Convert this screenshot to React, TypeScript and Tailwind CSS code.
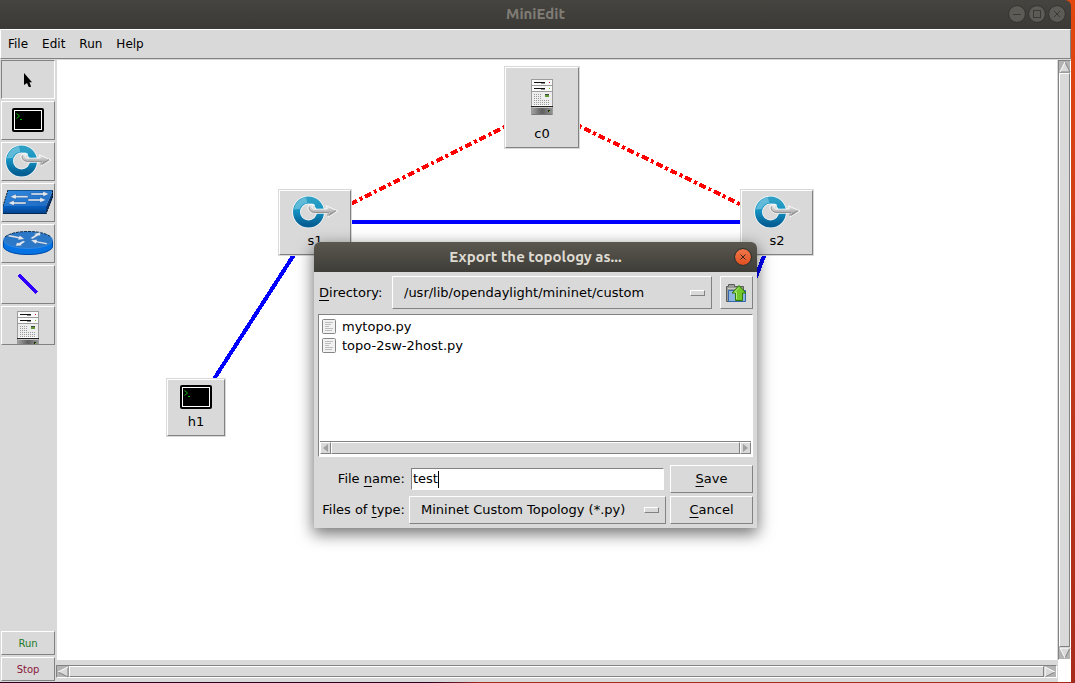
import { useState } from 'react';
import type { ReactNode } from 'react';
import clsx from 'clsx';

const raised = 'border border-t-white border-l-white border-r-[#828282] border-b-[#828282]';
const sunken = 'border border-t-[#828282] border-l-[#828282] border-r-white border-b-white';

/* ---------- Icons ---------- */

const CursorIcon = () => (
  <svg width="10" height="16" viewBox="0 0 10 16" aria-hidden="true">
    <path d="M1 1v12l3-2 1.800 4h2v-1L6.500 10.200H9z" fill="#000" />
  </svg>
);

const HostIcon = () => (
  <svg width="32" height="24" viewBox="0 0 32 24" aria-hidden="true">
    <rect width="32" height="24" rx="2" fill="#000" />
    <rect x="2.5" y="2.5" width="27" height="19" fill="#000" stroke="#fff" />
    <path d="M4.5 5.5l3 2.5-3 2.5M8 11.500h2" fill="none" stroke="#00b800" />
  </svg>
);

const SwitchIcon = () => (
  <svg width="46" height="34" viewBox="0 0 46 34" aria-hidden="true">
    <defs>
      <linearGradient id="ring" x1="0" y1="0" x2="0" y2="1">
        <stop offset="0" stopColor="#2d9fc4" />
        <stop offset="0.45" stopColor="#1593c2" />
        <stop offset="1" stopColor="#045f94" />
      </linearGradient>
      <linearGradient id="metal" x1="0" y1="0" x2="0" y2="1">
        <stop offset="0" stopColor="#f0f0f0" />
        <stop offset="0.5" stopColor="#c0c0c0" />
        <stop offset="1" stopColor="#858585" />
      </linearGradient>
    </defs>
    <circle cx="16.5" cy="17" r="12" fill="none" stroke="#f3f8fa" strokeWidth="8.600" />
    <circle cx="16.5" cy="17" r="12" fill="none" stroke="url(#ring)" strokeWidth="7" />
    <path d="M1.8 14.5A15 15 0 0 1 14 2.2l1.2 5.6A9.4 9.4 0 0 0 7.6 14z" fill="#7cc8e2" opacity="0.7" />
    <path
      d="M16.500 10.500c1.600-2 5-1.800 6.300-.2-2.600-.4-4 2-1.400 3.900l13.800-.2-.8-3.200 11.600 5.200-9.800 6 1-3.800-14.500.2c-5.800-.8-8-4.800-6.200-7.900z"
      fill="url(#metal)"
      stroke="#fff"
      strokeWidth="0.8"
    />
    <path d="M17.500 11.500c-1 3 1 5.500 5 6h14l-.8 3 8.300-5" fill="none" stroke="#8a8a8a" strokeWidth="0.8" />
  </svg>
);

const LegacySwitchIcon = () => (
  <svg width="50" height="25" viewBox="0 0 50 25" aria-hidden="true">
    <defs>
      <linearGradient id="boxTop" x1="0" y1="0" x2="1" y2="1">
        <stop offset="0" stopColor="#2f8ae2" />
        <stop offset="1" stopColor="#2069c0" />
      </linearGradient>
      <linearGradient id="boxFront" x1="0" y1="0" x2="0" y2="1">
        <stop offset="0" stopColor="#0762c4" />
        <stop offset="1" stopColor="#043f86" />
      </linearGradient>
    </defs>
    <path d="M0 16h43v8H0z" fill="url(#boxFront)" />
    <path d="M43 16l7-16v7l-7 17z" fill="#053a7c" />
    <path d="M5 0h45l-7 16H0z" fill="url(#boxTop)" />
    <path d="M5 0L0 16" stroke="#06101c" strokeDasharray="2 1" />
    <path d="M49.500 0v7l-6.500 17" fill="none" stroke="#06101c" strokeDasharray="2 1" />
    <path d="M5 .5h45" stroke="#12518f" />
    <path d="M0 23.500h43" stroke="#022a58" />
    <g fill="#e4e9ef" stroke="#1a5296" strokeWidth="0.4">
      <path d="M28 3h12V1.200l6 2.800-6 2.600V5H28z" />
      <path d="M25 5.700H13V4L7 6.800l6 2.500V7.700h12z" />
      <path d="M25 9h12V7.200l6 2.800-6 2.600V11H25z" />
      <path d="M23 12.100H11v-1.800l-6 2.800 6 2.500v-1.500h12z" />
    </g>
  </svg>
);

const LegacyRouterIcon = () => (
  <svg width="50" height="25" viewBox="0 0 50 25" aria-hidden="true">
    <path d="M0 9v6c0 5 11 9 25 9s25-4 25-9V9z" fill="#0673e4" />
    <path d="M.5 9v6c0 4.500 11 8.500 24.500 8.500s24.500-4 24.500-8.500V9" fill="none" stroke="#04408a" strokeWidth="0.8" />
    <ellipse cx="25" cy="9" rx="24.500" ry="8.500" fill="#2b78c9" stroke="#3c95ec" strokeWidth="0.6" />
    <path d="M2 6C7 2 16 .5 25 .5S43 2 48 6" fill="none" stroke="#06101c" strokeWidth="0.8" strokeDasharray="3 1" />
    <g fill="#e4e9ef" stroke="#1a5296" strokeWidth="0.3">
      <path d="M6 3.800l10 2 .8-1.400 4.800 3.700-6.600 1 .5-1.500-10.500-2z" />
      <path d="M27 7.200l5.500-3.400-2-.8L37.500 1l-.3 4-1.700-.6L29.500 8z" />
      <path d="M22.500 10.500l-4.500 3.200 1.600.8-7.100.6 1.500-3.600 1.800.6 4.300-2.400z" />
      <path d="M43.500 13.600l-10-2-.8 1.400-5-4 6.800-.6-.7 1.500 10.700 2z" />
    </g>
  </svg>
);

const LinkIcon = () => (
  <svg width="22" height="22" viewBox="0 0 22 22" aria-hidden="true">
    <path d="M2 2l18 18" stroke="#3200ff" strokeWidth="3.500" shapeRendering="crispEdges" />
  </svg>
);

const dotRows = [15, 17, 19, 21, 23, 25];

const ControllerIcon = () => (
  <svg width="22" height="36" viewBox="0 0 22 36" className="shrink-0" aria-hidden="true">
    <defs>
      <linearGradient id="base" x1="0" y1="0" x2="1" y2="0">
        <stop offset="0" stopColor="#a0a0a0" />
        <stop offset="0.5" stopColor="#5f5f5f" />
        <stop offset="1" stopColor="#929292" />
      </linearGradient>
    </defs>
    <rect width="22" height="36" fill="#9c9c9c" />
    <rect x="1" y="1" width="20" height="5" fill="#fafafa" />
    <rect x="1" y="7" width="20" height="5" fill="#fafafa" />
    <rect x="1" y="13" width="20" height="13" fill="#ededed" />
    <path d="M3 3h11v1H3zM3 9h11v1H3z" fill="#111" />
    <path d="M10 4h4v1h-4zM10 10h4v1h-4z" fill="#8a8a8a" />
    <rect x="18" y="3" width="1" height="1" fill="#cc1020" />
    <rect x="18" y="9" width="1" height="1" fill="#7ec81e" />
    {dotRows.map((y) => (
      <path
        key={y}
        d={y < 20 ? `M3 ${y}.5h8` : `M3 ${y}.5h16`}
        stroke="#9b9b9b"
        strokeDasharray="1 1"
      />
    ))}
    <rect x="14" y="15" width="4" height="1" fill="#444" />
    <rect x="14" y="16" width="4" height="2" fill="#5f9a35" />
    <rect x="1" y="26" width="20" height="1" fill="#fff" />
    <rect x="0" y="27" width="22" height="1" fill="#222" />
    <rect x="1" y="28" width="20" height="1" fill="#c4c4c4" />
    <rect x="1" y="29" width="20" height="6" fill="url(#base)" />
    <path d="M17 31h2v2h-2z" fill="#222" />
    <path d="M18 32h1v1h-1z" fill="#7ec81e" />
    <rect x="1" y="35" width="20" height="1" fill="#777" />
  </svg>
);

const FileIcon = () => (
  <svg width="14" height="15" viewBox="0 0 14 15" aria-hidden="true">
    <rect x="0.5" y="0.5" width="13" height="14" rx="1" fill="#f2f2f2" stroke="#858585" />
    <path d="M3 3.500h8M3 5.500h6M3 7.500h4M3 9.500h8M3 11.500h7" stroke="#bdbdbd" />
  </svg>
);

const FolderUpIcon = () => (
  <svg width="21" height="20" viewBox="0 0 21 20" aria-hidden="true">
    <path d="M.5 18.500V3.500h2v-2h6v2h9v15z" fill="#9a9c98" stroke="#5c5e5b" />
    <path d="M2 5.500h14" stroke="#c9cbc8" />
    <path d="M2.500 7.500h17v11h-17z" fill="#8fb3e0" stroke="#3465a4" />
    <path
      d="M13 2.500l7 7.500h-3.500v7.500h-7V10H6z"
      fill="#73c62a"
      stroke="#2f7a06"
      strokeLinejoin="round"
    />
    <path d="M13 4.500L8.500 9.200h2V16" stroke="#b6ea82" fill="none" />
  </svg>
);

type Direction = 'up' | 'down' | 'left' | 'right';

const arrows: Record<Direction, { fill: string; light: string; dark: string }> = {
  up: { fill: 'M6 1L1 11h10z', light: 'M6 1L1 11', dark: 'M1 11h10L6 1' },
  down: { fill: 'M1 1h10L6 11z', light: 'M6 11L1 1h10', dark: 'M11 1L6 11' },
  left: { fill: 'M1 6l10-5v10z', light: 'M1 6l10-5', dark: 'M11 1v10L1 6' },
  right: { fill: 'M1 1l10 5-10 5z', light: 'M1 11V1l10 5', dark: 'M11 6L1 11' },
};

const ScrollArrow = ({ direction }: { direction: Direction }) => (
  <button className="block h-3 w-3 shrink-0" aria-label={`Scroll ${direction}`}>
    <svg width="12" height="12" viewBox="0 0 12 12" aria-hidden="true">
      <path d={arrows[direction].fill} fill="#d9d9d9" />
      <path d={arrows[direction].dark} fill="none" stroke="#828282" />
      <path d={arrows[direction].light} fill="none" stroke="#fff" />
    </svg>
  </button>
);

/* ---------- Main window ---------- */

const tools = [
  { name: 'Select', icon: <CursorIcon />, align: 'items-center pt-px' },
  { name: 'Host', icon: <HostIcon />, align: 'items-center pb-0.5' },
  { name: 'Switch', icon: <SwitchIcon />, align: 'items-center pb-0.5' },
  { name: 'LegacySwitch', icon: <LegacySwitchIcon />, align: 'items-center' },
  { name: 'LegacyRouter', icon: <LegacyRouterIcon />, align: 'items-center' },
  { name: 'NetLink', icon: <LinkIcon />, align: 'items-center pb-0.5' },
  // taller than its button, the base is clipped
  { name: 'Controller', icon: <ControllerIcon />, align: 'items-start pt-1' },
];

const Toolbar = () => {
  const [active, setActive] = useState('Select');

  return (
    <aside className="flex w-14 shrink-0 flex-col justify-between pr-px pb-px pl-px">
      <div className="flex flex-col gap-0.5">
        {tools.map((tool) => (
          <button
            key={tool.name}
            aria-label={tool.name}
            onClick={() => setActive(tool.name)}
            className={clsx(
              'flex h-[39px] justify-center overflow-hidden',
              tool.align,
              active === tool.name ? sunken : raised,
            )}
          >
            {tool.icon}
          </button>
        ))}
      </div>
      <div className="flex flex-col gap-0.5 text-[10px]">
        <button className={`h-6 text-[#1b7a2b] ${raised}`}>Run</button>
        <button className={`h-6 text-[#8b1a3a] ${raised}`}>Stop</button>
      </div>
    </aside>
  );
};

type NodeProps = { label: string; place: string; children: ReactNode };

const TopologyNode = ({ label, place, children }: NodeProps) => (
  <div className={`absolute border border-[#d9d9d9] bg-[#d9d9d9] ${place}`}>
    <button className={`flex h-full w-full flex-col items-center justify-between pb-[3px] text-[13px] leading-5 ${raised}`}>
      {children}
      <span>{label}</span>
    </button>
  </div>
);

const Canvas = () => (
  <div className="relative flex-1 overflow-hidden border-x border-[#d9d9d9] bg-white">
    <svg className="absolute top-0 left-0" width="1000" height="600" shapeRendering="crispEdges" aria-hidden="true">
      <g stroke="#ff0000" strokeWidth="4" strokeDasharray="7 3 3 3" strokeDashoffset="1">
        <path d="M485 48L258 162" />
        <path d="M485 48L720 162" />
      </g>
      <g stroke="#0000ff" strokeWidth="4">
        <path d="M258 162H720" />
        <path d="M258 162L139 347" />
        <path d="M720 162L643 363" />
      </g>
    </svg>
    <TopologyNode label="c0" place="top-[6px] left-[447px] h-[83px] w-[76px] [&>button]:pt-[11px]">
      <ControllerIcon />
    </TopologyNode>
    <TopologyNode label="s1" place="top-[129px] left-[221px] h-[67px] w-[74px] [&>button]:pt-1">
      <SwitchIcon />
    </TopologyNode>
    <TopologyNode label="s2" place="top-[129px] left-[683px] h-[67px] w-[74px] [&>button]:pt-1">
      <SwitchIcon />
    </TopologyNode>
    <TopologyNode label="h1" place="top-[318px] left-[109px] h-[59px] w-[60px] [&>button]:pt-[5px]">
      <HostIcon />
    </TopologyNode>
  </div>
);

const WindowButton = ({ label, children }: { label: string; children: ReactNode }) => (
  <button aria-label={label} className="h-4 w-4 rounded-full bg-[#5d5b56] outline outline-[#373632]">
    <svg width="16" height="16" viewBox="0 0 16 16" fill="none" stroke="#3a3935" aria-hidden="true">
      {children}
    </svg>
  </button>
);

const TitleBar = () => (
  <header className="grid h-[29px] shrink-0 grid-cols-[1fr_auto_1fr] items-center rounded-tr-md bg-linear-to-b from-[#45443f] to-[#3b3a36] px-1.5 pb-px">
    <span />
    <h1 className="font-[Ubuntu,'Noto_Sans',sans-serif] text-[15px] leading-5 font-bold text-[#807d76]">MiniEdit</h1>
    <div className="flex justify-end gap-1">
      <WindowButton label="Minimize">
        <path d="M4 8.500h8" />
      </WindowButton>
      <WindowButton label="Maximize">
        <rect x="4.500" y="4.500" width="7" height="7" />
      </WindowButton>
      <WindowButton label="Close">
        <path d="M5 5l6 6M11 5l-6 6" />
      </WindowButton>
    </div>
  </header>
);

const MenuBar = () => (
  <nav className={`flex h-[30px] shrink-0 items-center gap-0.5 pl-px text-xs ${raised}`}>
    {['File', 'Edit', 'Run', 'Help'].map((item) => (
      <button key={item} className="px-1.5">
        {item}
      </button>
    ))}
  </nav>
);

/* ---------- Export dialog ---------- */

const Accel = ({ children }: { children: string }) => (
  <span className="underline decoration-1 underline-offset-3">{children}</span>
);

const DropDown = ({ id, value, className }: { id: string; value: string; className: string }) => (
  <div className={`flex items-center pr-1.5 pl-[11px] ${raised} ${className}`}>
    <select id={id} className="min-w-0 flex-1 appearance-none outline-none">
      <option>{value}</option>
    </select>
    <span className={`h-1.5 w-[15px] ${raised}`} />
  </div>
);

const files = ['mytopo.py', 'topo-2sw-2host.py'];

const ExportDialog = () => {
  const [fileName, setFileName] = useState('test');

  return (
    <div
      role="dialog"
      aria-labelledby="dialog-title"
      className="absolute top-[242px] left-[314px] w-[443px] rounded-t-md bg-[#d9d9d9] text-[13px] shadow-[0_5px_16px_1px_rgba(0,0,0,0.55)]"
    >
      <div className="grid h-[30px] grid-cols-[1fr_auto_1fr] items-center rounded-t-md bg-linear-to-b from-[#5b584f] to-[#3e3d38] px-1.5">
        <span />
        <h2
          id="dialog-title"
          className="font-[Ubuntu,'Noto_Sans',sans-serif] text-[15px] leading-5 font-bold text-[#dfdbd2]"
        >
          Export the topology as...
        </h2>
        <button
          aria-label="Close dialog"
          className="h-4 w-4 justify-self-end rounded-full bg-linear-to-b from-[#f2764a] to-[#e0501f] outline outline-[#33322e]"
        >
          <svg width="16" height="16" viewBox="0 0 16 16" stroke="#3a2a20" aria-hidden="true">
            <path d="M5.500 5.500l5 5M10.500 5.500l-5 5" />
          </svg>
        </button>
      </div>

      <form className="px-1 pt-1" onSubmit={(e) => e.preventDefault()}>
        <div className="flex items-center pl-px">
          <label htmlFor="directory" className="w-[73px]">
            <Accel>D</Accel>irectory:
          </label>
          <DropDown id="directory" value="/usr/lib/opendaylight/mininet/custom" className="h-[33px] flex-1" />
          <button
            type="button"
            aria-label="Up one directory"
            className={`ml-2 flex h-[33px] w-[33px] items-center justify-center ${raised}`}
          >
            <FolderUpIcon />
          </button>
        </div>

        <div className={`mt-[5px] flex h-[143px] flex-col justify-between bg-white p-px ${sunken}`}>
          <ul className="pt-px">
            {files.map((file) => (
              <li key={file}>
                <button
                  type="button"
                  onClick={() => setFileName(file)}
                  className="flex h-[19px] items-center gap-1.5 pl-0.5"
                >
                  <FileIcon />
                  {file}
                </button>
              </li>
            ))}
          </ul>
          <div className="flex h-3.5 border-y border-t-[#828282] border-b-white bg-[#d9d9d9]">
            <button type="button" aria-label="Scroll list left" className={`flex w-[11px] items-center justify-center ${raised}`}>
              <svg width="5" height="8" viewBox="0 0 5 8" aria-hidden="true">
                <path d="M5 0v8L0 4z" fill="#a0a0a0" />
              </svg>
            </button>
            <span className={`flex-1 ${raised}`} />
            <button type="button" aria-label="Scroll list right" className={`flex w-[11px] items-center justify-center ${raised}`}>
              <svg width="5" height="8" viewBox="0 0 5 8" aria-hidden="true">
                <path d="M0 0v8l5-4z" fill="#a0a0a0" />
              </svg>
            </button>
          </div>
        </div>

        <div className="mt-2 grid grid-cols-[87px_1fr_83px] items-center gap-x-1 gap-y-[3px] pb-1">
          <label htmlFor="file-name" className="text-right">
            File <Accel>n</Accel>ame:
          </label>
          <div className={`mr-0.5 ml-0.5 flex h-[22px] items-center bg-white px-px ${sunken}`}>
            <input
              id="file-name"
              value={fileName}
              onChange={(e) => setFileName(e.target.value)}
              className="field-sizing-content outline-none"
            />
            <span className="h-[17px] w-px bg-black" />
          </div>
          <button type="submit" className={`h-7 ${raised}`}>
            <Accel>S</Accel>ave
          </button>

          <label htmlFor="file-type" className="text-right">
            Files of <Accel>t</Accel>ype:
          </label>
          <DropDown id="file-type" value="Mininet Custom Topology (*.py)" className="h-7" />
          <button type="button" className={`h-7 ${raised}`}>
            <Accel>C</Accel>ancel
          </button>
        </div>
      </form>
    </div>
  );
};

export default function App() {
  return (
    <div className="relative flex h-screen min-h-[560px] flex-col overflow-hidden bg-linear-to-b from-[#e2480f] to-[#a62a1c] pr-1 font-['DejaVu_Sans',sans-serif] text-black">
      <TitleBar />
      <main className="flex min-h-0 flex-1 flex-col bg-[#d9d9d9]">
        <MenuBar />
        <div className="flex min-h-0 flex-1 pt-px">
          <Toolbar />
          <div className="flex min-w-0 flex-1 flex-col">
            <Canvas />
            <div className="h-[22px] pt-[5px] pr-px">
              <div className={`flex h-[13px] bg-[#b3b3b3] ${sunken}`}>
                <ScrollArrow direction="left" />
                <span className={`flex-1 bg-[#d9d9d9] ${raised}`} />
                <ScrollArrow direction="right" />
              </div>
            </div>
          </div>
          <div className="flex flex-col bg-white pb-[22px]">
            <div className={`flex w-[13px] flex-1 flex-col bg-[#b3b3b3] ${sunken}`}>
              <ScrollArrow direction="up" />
              <span className={`flex-1 bg-[#d9d9d9] ${raised}`} />
              <ScrollArrow direction="down" />
            </div>
          </div>
        </div>
      </main>
      {/* Desktop wallpaper below the window */}
      <div className="h-px shrink-0 bg-linear-to-r from-[#2c001e] from-40% to-[#a62a1c] to-45%" />
      <ExportDialog />
    </div>
  );
}
